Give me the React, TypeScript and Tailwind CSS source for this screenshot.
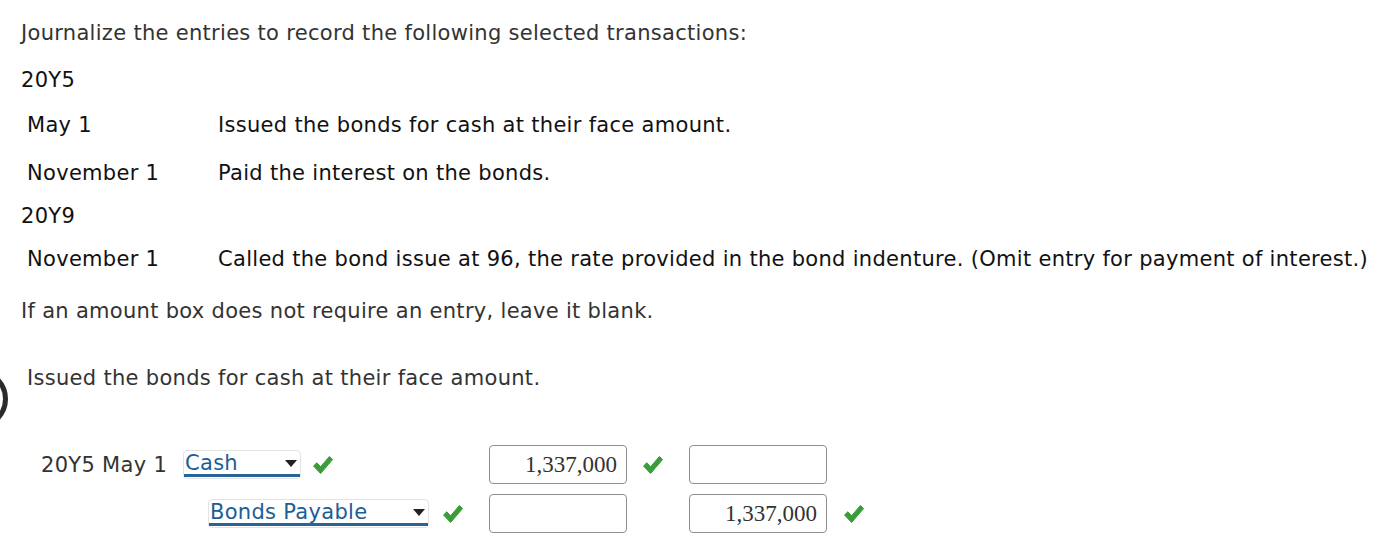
import React from 'react';

const font = { fontFamily: '"DejaVu Sans", Verdana, sans-serif', letterSpacing: '0.3px' };

function Check() {
  return (
    <svg width="20" height="20" viewBox="0 0 20 20" className="block shrink-0">
      <path d="M0.5 11 L3.8 7.8 L7.6 11.8 L16.4 1.5 L19.6 4.5 L7.6 18.5 Z" fill="#3a9d3a" stroke="#3a9d3a" strokeWidth="1" strokeLinejoin="round" />
    </svg>
  );
}

function AccountSelect({ label, width }: { label: string; width: string }) {
  return (
    <div className={`relative h-[29px] ${width} flex items-center rounded-[4px] border border-[#e3e3e3] shrink-0`}>
      <span className="text-[21px] leading-none text-[#1b5e96] pl-[1px] pb-[3px]">{label}</span>
      <span className="absolute right-[3px] top-[9px] w-0 h-0 border-l-[6px] border-r-[6px] border-t-[7px] border-l-transparent border-r-transparent border-t-[#222]" />
      <span className="absolute left-0 right-0 bottom-[1px] h-[3px] bg-[#2a6496]" />
    </div>
  );
}

function Amount({ value }: { value?: string }) {
  return (
    <div
      className="w-[138px] h-[39px] rounded-[4px] border border-[#8f8f8f] bg-white flex items-center justify-end pr-[9px] text-[23px] text-[#333] shrink-0"
      style={{ fontFamily: '"Liberation Serif", "Times New Roman", serif', letterSpacing: '0px' }}
    >
      {value}
    </div>
  );
}

export default function App() {
  return (
    <div className="relative w-[1386px] h-[551px] bg-white overflow-hidden" style={font}>
      <div className="absolute left-[-52px] top-[369px] w-[60px] h-[60px] rounded-full border-[5px] border-[#2b2b2b]" />
      <div className="pl-[21px] pt-[21px] text-[21px] leading-[24px]">
        <p className="text-[#333]">Journalize the entries to record the following selected transactions:</p>
        <p className="mt-[23px] text-[#111]">20Y5</p>
        <div className="mt-[21px] flex text-[#111] pl-[6px]">
          <span className="w-[191px]">May 1</span>
          <span>Issued the bonds for cash at their face amount.</span>
        </div>
        <div className="mt-[24px] flex text-[#111] pl-[6px]">
          <span className="w-[191px]">November 1</span>
          <span>Paid the interest on the bonds.</span>
        </div>
        <p className="mt-[19px] text-[#111]">20Y9</p>
        <div className="mt-[19px] flex text-[#111] pl-[6px] whitespace-nowrap">
          <span className="w-[191px] shrink-0">November 1</span>
          <span>Called the bond issue at 96, the rate provided in the bond indenture. (Omit entry for payment of interest.)</span>
        </div>
        <p className="mt-[28px] text-[#333]">If an amount box does not require an entry, leave it blank.</p>
        <p className="mt-[43px] text-[#333] pl-[6px]">Issued the bonds for cash at their face amount.</p>

        <div className="mt-[55px] flex items-center h-[39px]">
          <span className="ml-[20px] w-[142px] shrink-0 whitespace-nowrap text-[#333]">20Y5 May 1</span>
          <AccountSelect label="Cash" width="w-[118px]" />
          <span className="ml-[12px]"><Check /></span>
          <span className="ml-[156px]"><Amount value="1,337,000" /></span>
          <span className="ml-[16px]"><Check /></span>
          <span className="ml-[26px]"><Amount /></span>
        </div>
        <div className="mt-[10px] flex items-center h-[39px]">
          <span className="ml-[187px]"><AccountSelect label="Bonds Payable" width="w-[221px]" /></span>
          <span className="ml-[14px]"><Check /></span>
          <span className="ml-[26px]"><Amount /></span>
          <span className="ml-[62px]"><Amount value="1,337,000" /></span>
          <span className="ml-[17px]"><Check /></span>
        </div>
      </div>
    </div>
  );
}
